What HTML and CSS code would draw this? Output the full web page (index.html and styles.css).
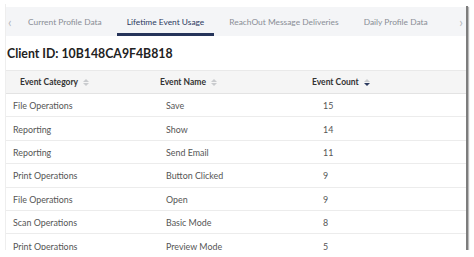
FILE: index.html
```html
<!DOCTYPE html>
<html lang="en">
<head>
    <meta charset="UTF-8">
    <title>Client Profile - Lifetime Event Usage</title>
    <link rel="stylesheet" href="styles.css">
</head>
<body>
    <div class="frame">
        <nav class="tabs">
            <span class="tab-arrow">&lsaquo;</span>
            <a class="tab" href="#">Current Profile Data</a>
            <a class="tab active" href="#">Lifetime Event Usage</a>
            <a class="tab" href="#">ReachOut Message Deliveries</a>
            <a class="tab" href="#">Daily Profile Data</a>
            <span class="tab-arrow right">&rsaquo;</span>
        </nav>

        <h2 class="client-id">Client ID: 10B148CA9F4B818</h2>

        <table class="events">
            <thead>
                <tr>
                    <th class="col-cat">Event Category <span class="sort"><i class="up"></i><i class="down"></i></span></th>
                    <th class="col-name">Event Name <span class="sort"><i class="up"></i><i class="down"></i></span></th>
                    <th class="col-count">Event Count <span class="sort desc"><i class="up"></i><i class="down"></i></span></th>
                </tr>
            </thead>
            <tbody id="event-rows"></tbody>
        </table>
    </div>

    <script>
        const events = [
            ['File Operations', 'Save', 15],
            ['Reporting', 'Show', 14],
            ['Reporting', 'Send Email', 11],
            ['Print Operations', 'Button Clicked', 9],
            ['File Operations', 'Open', 9],
            ['Scan Operations', 'Basic Mode', 8],
            ['Print Operations', 'Preview Mode', 5]
        ];
        const body = document.getElementById('event-rows');
        events.forEach(ev => {
            const tr = document.createElement('tr');
            tr.innerHTML = `<td>${ev[0]}</td><td class="name">${ev[1]}</td><td class="count">${ev[2]}</td>`;
            body.appendChild(tr);
        });
    </script>
</body>
</html>
```

FILE: styles.css
```css
body {
    margin: 0;
    background: #fff;
    font-family: 'Lato', 'Liberation Sans', sans-serif;
    overflow: hidden;
}
.frame {
    margin: 4px 0 0 5px;
    width: 460px;
    height: 246px;
    overflow: hidden;
    border-left: 1px solid #eee;
    box-shadow: 2px 2px 0 #7d7d7d, 3px 3px 1px #bbb;
}
.tabs {
    display: flex;
    align-items: center;
    gap: 5px;
    margin-top: 3px;
    height: 29px;
    background: #f4f5f7;
    white-space: nowrap;
}
.tab-arrow {
    color: #b5b8bd;
    font-size: 13px;
    width: 5px;
    padding-left: 2px;
}
.tab-arrow.right {
    margin-left: auto;
    width: auto;
    padding-right: 3px;
}
.tab {
    flex-shrink: 0;
    color: #8a8e96;
    text-decoration: none;
    font-size: 8.4px;
    padding: 0 10px;
    height: 29px;
    line-height: 30px;
    box-sizing: border-box;
}
.tab.active {
    color: #2c3a5f;
    border-bottom: 3px solid #26345a;
}
.client-id {
    margin: 10px 0 0 1px;
    font-size: 12.3px;
    font-weight: bold;
    color: #222;
    height: 24px;
}
.events {
    width: 100%;
    border-collapse: collapse;
    font-size: 8.5px;
}
.events th {
    background: #f5f5f5;
    color: #333;
    font-weight: bold;
    text-align: left;
    height: 22px;
    padding: 0;
    border-top: 1px solid #e9e9e9;
    border-bottom: 1px solid #e3e3e3;
}
.events td {
    color: #555;
    font-size: 8.9px;
    height: 21.4px;
    padding: 1px 0 0;
    border-bottom: 1px solid #ececec;
}
.col-cat { padding-left: 14px !important; width: 140px; }
.col-name { width: 152px; }
.events td:first-child { padding-left: 7px; }
.events td.name { padding-left: 6px; }
.events td.count { padding-left: 11px; }
.sort {
    display: inline-flex;
    flex-direction: column;
    vertical-align: middle;
    gap: 1px;
    margin-left: 3px;
}
.sort i {
    width: 0;
    height: 0;
    border-left: 3px solid transparent;
    border-right: 3px solid transparent;
}
.sort .up { border-bottom: 3px solid #c9cbce; }
.sort .down { border-top: 3px solid #c9cbce; }
.sort.desc .down { border-top-color: #2c3a5f; }
```
